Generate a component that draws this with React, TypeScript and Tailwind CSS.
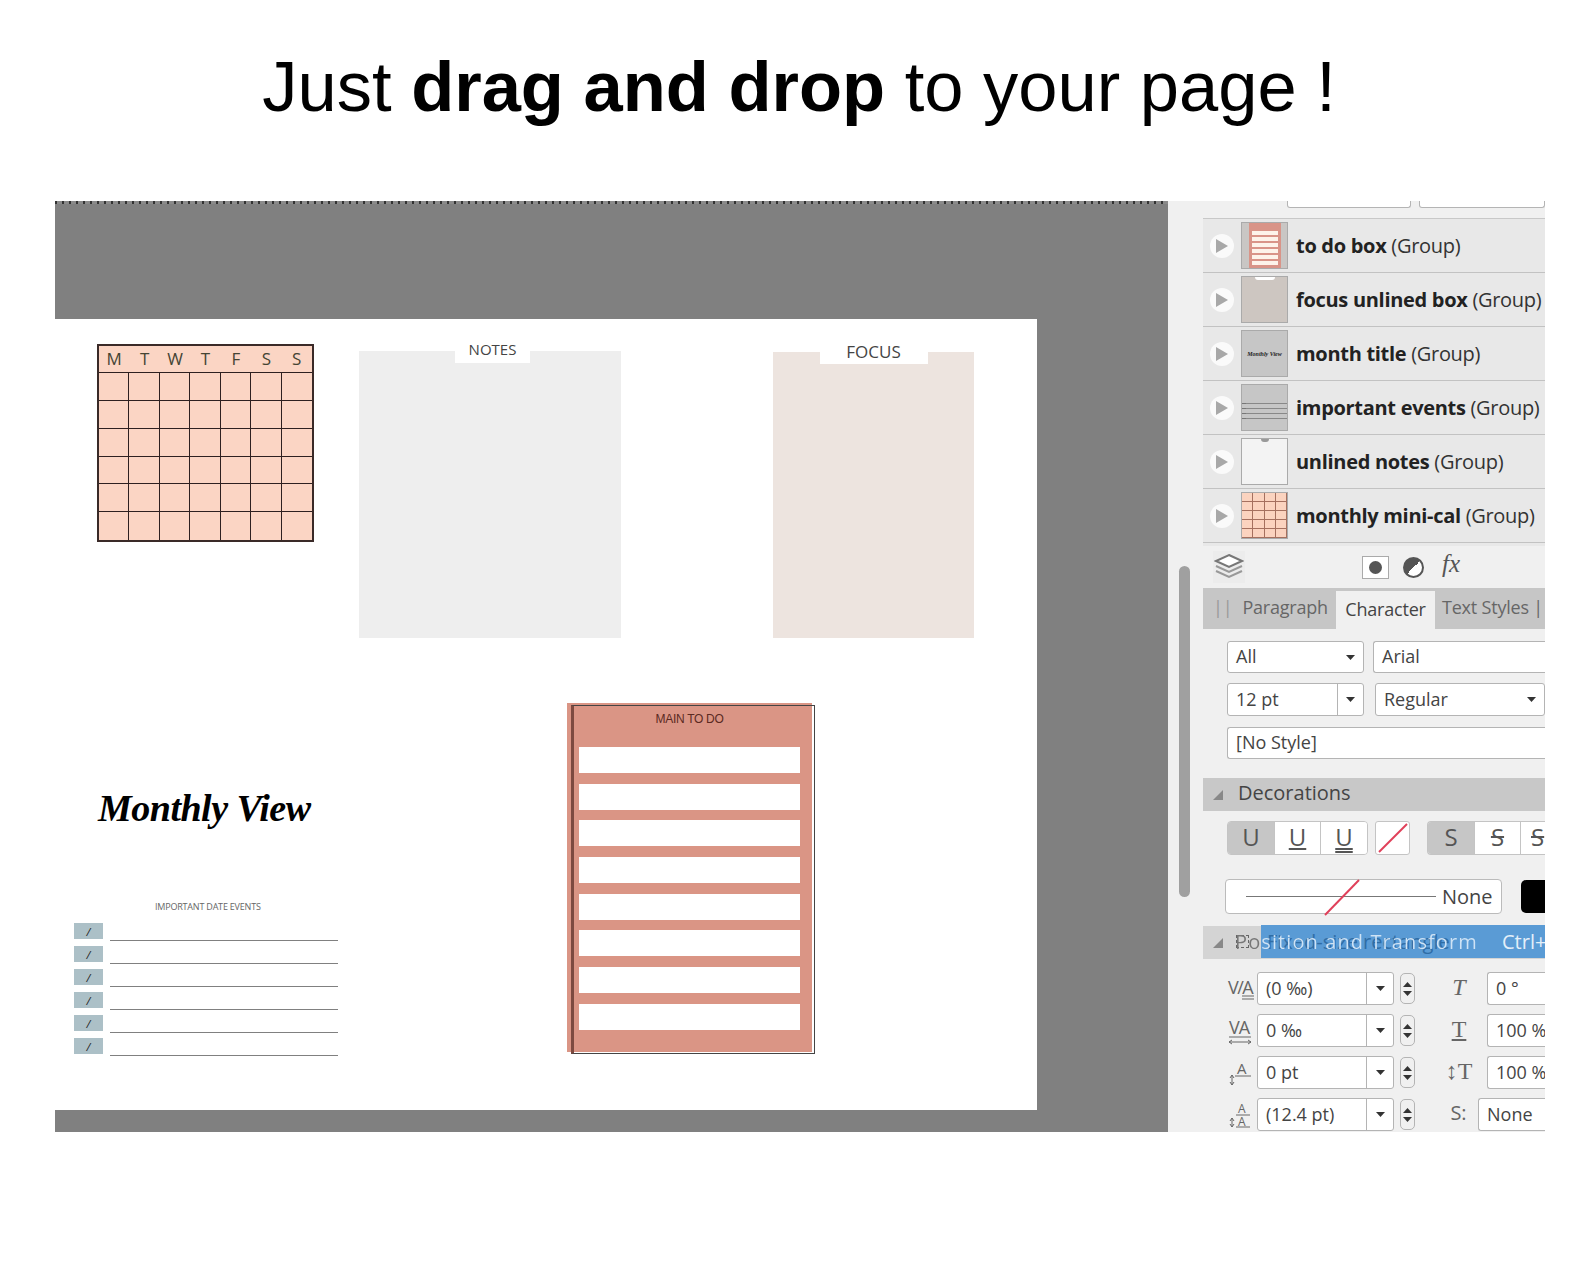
import React from 'react';

const ui = "font-['Open_Sans','Noto_Sans',sans-serif]";

const layers = [
  { name: 'to do box', thumb: 'todo' },
  { name: 'focus unlined box', thumb: 'focus' },
  { name: 'month title', thumb: 'title' },
  { name: 'important events', thumb: 'events' },
  { name: 'unlined notes', thumb: 'notes' },
  { name: 'monthly mini-cal', thumb: 'cal' },
];

const Caret = () => (
  <svg width="9" height="5" viewBox="0 0 9 5" className="shrink-0">
    <path d="M0 0h9L4.5 5z" fill="#333" />
  </svg>
);

const Thumb: React.FC<{ kind: string }> = ({ kind }) => {
  if (kind === 'todo') {
    return (
      <div className="w-[47px] h-[47px] bg-[#c9c6c4] border border-[#aaa] flex justify-center">
        <div className="w-[32px] h-full bg-[#d99488] flex flex-col gap-[2px] px-[3px] pt-[8px]">
          {[0, 1, 2, 3, 4, 5].map((i) => (
            <div key={i} className="h-[4px] bg-[#fdf3ea]" />
          ))}
        </div>
      </div>
    );
  }
  if (kind === 'focus') {
    return (
      <div className="w-[47px] h-[47px] bg-[#cdc6c1] border border-[#aaa] flex justify-center">
        <div className="w-[20px] h-[3px] bg-white rounded-b-full" />
      </div>
    );
  }
  if (kind === 'title') {
    return (
      <div className="w-[47px] h-[47px] bg-[#c6c6c6] border border-[#aaa] flex items-center justify-center overflow-hidden">
        <span className="text-[6px] leading-none font-bold italic text-[#222] whitespace-nowrap font-['Liberation_Serif',serif]">Monthly View</span>
      </div>
    );
  }
  if (kind === 'events') {
    return (
      <div className="w-[47px] h-[47px] bg-[#c6c6c6] border border-[#aaa] flex flex-col justify-center gap-[4px] pt-[6px]">
        {[0, 1, 2, 3].map((i) => (
          <div key={i} className="h-px bg-[#888] border-l-4 border-[#777]" />
        ))}
      </div>
    );
  }
  if (kind === 'notes') {
    return (
      <div className="w-[47px] h-[47px] bg-[#f3f3f3] border border-[#aaa] flex justify-center">
        <div className="w-[8px] h-[3px] bg-[#999] rounded-b-full" />
      </div>
    );
  }
  return (
    <div className="w-[47px] h-[47px] bg-[#fbd3bf] border border-[#aaa] grid grid-cols-4 grid-rows-5">
      {Array.from({ length: 20 }).map((_, i) => (
        <div key={i} className="border-r border-b border-[#a5705f]" />
      ))}
    </div>
  );
};

const LayerRow: React.FC<{ name: string; thumb: string }> = ({ name, thumb }) => (
  <div className="h-[54px] flex items-center border-b border-[#c2c2c2] bg-[#e8e8e8] shrink-0">
    <div className="w-[38px] flex justify-center shrink-0">
      <div className="w-[24px] h-[24px] rounded-full bg-[#fafafa] flex items-center justify-center">
        <svg width="14" height="16" viewBox="0 0 14 16">
          <path d="M1 1l12 7-12 7z" fill="#a8a8a8" />
        </svg>
      </div>
    </div>
    <Thumb kind={thumb} />
    <span className="ml-[8px] text-[20px] tracking-[-0.3px] text-[#333] whitespace-nowrap">
      <b className="font-bold text-[#222]">{name}</b> (Group)
    </span>
  </div>
);

const Select: React.FC<{ label: string; className: string; split?: boolean; caret?: boolean }> = ({
  label,
  className,
  split,
  caret = true,
}) => (
  <div className={`flex items-center bg-white border border-[#b4b4b4] rounded-[3px] pl-[8px] text-[18px] text-[#444] whitespace-nowrap ${className}`}>
    <span className="flex-1 pb-[1px]">{label}</span>
    {caret && (
      <span className={`h-full flex items-center justify-center w-[26px] shrink-0 ${split ? 'border-l border-[#b4b4b4]' : ''}`}>
        <Caret />
      </span>
    )}
  </div>
);

const Spinner = () => (
  <div className="w-[15px] h-[31px] border border-[#b4b4b4] rounded-[5px] flex flex-col items-center justify-center gap-[4px] ml-[6px] shrink-0">
    <svg width="9" height="5" viewBox="0 0 9 5"><path d="M4.5 0L9 5H0z" fill="#333" /></svg>
    <svg width="9" height="5" viewBox="0 0 9 5"><path d="M0 0h9L4.5 5z" fill="#333" /></svg>
  </div>
);

// character metric icons, built from real letters plus rules and arrows
const MetricIcon: React.FC<{ kind: number }> = ({ kind }) => (
  <svg width="28" height="32" viewBox="0 0 28 32" fontFamily="'Open Sans',sans-serif" fill="#666" stroke="none">
    {kind === 0 && (
      <>
        <text x="1" y="21" fontSize="18" letterSpacing="-1.5">V/A</text>
        <path d="M15 23h12M15 26h12" stroke="#666" fill="none" />
      </>
    )}
    {kind === 1 && (
      <>
        <text x="2" y="19" fontSize="18" letterSpacing="-1">VA</text>
        <path d="M2 22h22M2 27h22M2 27l3-2M2 27l3 2M24 27l-3-2M24 27l-3 2" stroke="#666" fill="none" />
      </>
    )}
    {kind === 2 && (
      <>
        <text x="10" y="17" fontSize="15">A</text>
        <path d="M8 19h16M5 18v10M5 18l-2 3M5 18l2 3M5 28l-2-3M5 28l2-3" stroke="#666" fill="none" />
      </>
    )}
    {kind === 3 && (
      <>
        <text x="11" y="14" fontSize="12">A</text>
        <text x="11" y="27" fontSize="12">A</text>
        <path d="M9 16h14M9 28h14M5 19v9M5 19l-2 3M5 19l2 3M5 28l-2-3M5 28l2-3" stroke="#666" fill="none" />
      </>
    )}
  </svg>
);

const metricRows = [
  { value: '(0 ‰)', side: 'T', sideValue: '0 °', sideClass: "w-[72px] pl-[16px] text-[24px] italic font-['Liberation_Serif']" },
  { value: '0 ‰', side: 'T', sideValue: '100 %', sideClass: "w-[72px] pl-[16px] text-[24px] underline font-['Liberation_Serif']" },
  { value: '0 pt', side: '↕T', sideValue: '100 %', sideClass: "w-[72px] pl-[16px] text-[24px] font-['Liberation_Serif']" },
  { value: '(12.4 pt)', side: 'S:', sideValue: 'None', sideClass: 'w-[63px] pl-[24px] text-[20px]' },
];

const DecoButton: React.FC<{ label: string; className: string; on?: boolean }> = ({ label, className, on }) => (
  <div className={`h-full shrink-0 flex items-center justify-center text-[24px] pb-[3px] text-[#555] border-r border-[#c4c4c4] ${on ? 'bg-[#c6c6c6]' : 'bg-white'} ${className}`}>
    {label}
  </div>
);

const Panel = () => (
  <div className={`w-[377px] bg-[#f0f0f0] flex overflow-hidden ${ui}`}>
    {/* scrollbar */}
    <div className="w-[35px] shrink-0 pt-[365px] pl-[11px]">
      <div className="w-[11px] h-[331px] bg-[#a0a0a0] rounded-full" />
    </div>

    <div className="flex-1 min-w-0 flex flex-col">
      {/* clipped fields from the panel above */}
      <div className="h-[18px] flex gap-[8px] pl-[84px] shrink-0 border-b border-[#c8c8c8]">
        <div className="w-[128px] h-[7px] bg-white border-x border-b border-[#b4b4b4] rounded-b-[3px]" />
        <div className="w-[130px] h-[7px] bg-white border-x border-b border-[#b4b4b4] rounded-b-[3px]" />
      </div>

      {layers.map((l) => (
        <LayerRow key={l.name} name={l.name} thumb={l.thumb} />
      ))}
      <div className="h-[3px] shrink-0 bg-[#e8e8e8]" />

      {/* layer tools */}
      <div className="h-[42px] flex items-center shrink-0">
        <div className="ml-[10px] w-[32px] h-[32px] flex items-center justify-center bg-[#ececec]">
          <svg width="30" height="28" viewBox="0 0 30 28" fill="none" stroke="#999" strokeWidth="2">
            <path d="M15 2l13 6-13 6-13-6z" fill="#fff" stroke="#777" />
            <path d="M2 13l13 6 13-6M2 18l13 6 13-6" />
          </svg>
        </div>
        <div className="ml-[117px] w-[27px] h-[23px] bg-white border border-[#aaa] flex items-center justify-center">
          <div className="w-[13px] h-[13px] rounded-full bg-[#555]" />
        </div>
        <div className="ml-[14px] w-[21px] h-[21px] rounded-full border-2 border-[#555] bg-[linear-gradient(135deg,#555_50%,#fff_50%)]" />
        <span className="ml-[18px] font-['Liberation_Serif'] italic text-[25px] text-[#555] pb-[6px]">fx</span>
      </div>

      {/* tabs */}
      <div className="h-[41px] bg-[#c6c6c6] flex items-end shrink-0 text-[18px] text-[#666] tracking-[-0.2px]">
        <div className="h-full flex items-center w-[133px] pl-[10px] pb-[2px]">
          <span className="text-[#999] mr-[10px]">||</span>Paragraph
        </div>
        <div className="h-[38px] w-[99px] bg-[#f0f0f0] flex items-center justify-center text-[#444] pb-[2px]">Character</div>
        <div className="h-full flex items-center pl-[7px] pb-[2px] whitespace-nowrap">Text Styles |</div>
      </div>

      {/* character fields */}
      <div className="flex flex-col pl-[24px] pt-[12px] shrink-0">
        <div className="flex h-[32px] gap-[9px]">
          <Select label="All" className="w-[137px]" />
          <Select label="Arial" className="flex-1 rounded-r-none border-r-0" caret={false} />
        </div>
        <div className="flex h-[33px] gap-[11px] mt-[10px]">
          <Select label="12 pt" className="w-[137px]" split />
          <Select label="Regular" className="flex-1" />
        </div>
        <div className="flex h-[32px] mt-[11px]">
          <Select label="[No Style]" className="flex-1 rounded-r-none border-r-0" caret={false} />
        </div>
      </div>

      {/* decorations */}
      <div className="h-[33px] mt-[19px] bg-[#c8c8c8] flex items-center shrink-0 text-[20px] text-[#444]">
        <svg width="12" height="12" viewBox="0 0 12 12" className="ml-[9px]"><path d="M11 1v10H1z" fill="#888" /></svg>
        <span className="ml-[14px] pb-[4px]">Decorations</span>
      </div>

      <div className="h-[34px] mt-[10px] pl-[24px] flex shrink-0">
        <div className="flex h-full border border-[#c4c4c4] rounded-[4px] overflow-hidden">
          <DecoButton label="U" className="w-[47px]" on />
          <DecoButton label="U" className="w-[46px] underline" />
          <DecoButton label="U" className="w-[46px] underline decoration-double border-r-0" />
        </div>
        <div className="ml-[7px] w-[35px] h-full bg-white border border-[#c4c4c4] rounded-[3px]">
          <svg width="33" height="32" viewBox="0 0 33 32">
            <path d="M3 30L31 2" stroke="#e0405a" strokeWidth="2" />
          </svg>
        </div>
        <div className="ml-[17px] flex-1 flex h-full border border-[#c4c4c4] border-r-0 rounded-l-[4px] overflow-hidden">
          <DecoButton label="S" className="w-[47px]" on />
          <DecoButton label="S" className="w-[46px] line-through" />
          <DecoButton label="S" className="w-[30px] line-through border-r-0 justify-start pl-[10px]" />
        </div>
      </div>

      {/* line style */}
      <div className="h-[35px] mt-[24px] pl-[22px] flex items-center shrink-0">
        <div className="w-[277px] h-full bg-white border border-[#bbb] rounded-[4px] flex items-center pl-[20px] relative text-[20px] text-[#444]">
          <div className="w-[190px] h-px bg-[#777]" />
          <span className="ml-[6px]">None</span>
          <svg width="36" height="37" viewBox="0 0 36 37" className="absolute left-[98px] top-[-1px]">
            <path d="M1 36L35 1" stroke="#e0405a" strokeWidth="2" />
          </svg>
        </div>
        <div className="ml-[19px] flex-1 h-[33px] bg-black rounded-l-[5px]" />
      </div>

      {/* transform header, the drag ghost lies across it */}
      <div className="h-[33px] mt-[12px] bg-[#d4d4d4] flex items-center shrink-0 relative text-[20px] whitespace-nowrap">
        <div className="absolute left-[58px] right-0 top-[-1px] h-[33px] bg-[#5a9bd5]" />
        <span className="absolute left-[64px] top-0 h-[31px] flex items-center text-[#2f6da6]">Fixed-size rectangle</span>
        <svg width="12" height="12" viewBox="0 0 12 12" className="relative ml-[9px]"><path d="M11 1v10H1z" fill="#888" /></svg>
        <div className="absolute left-[33px] top-[9px] w-[13px] h-[13px] border border-dashed border-[#666]" />
        <span className="relative ml-[11px] pb-[2px] tracking-[1.1px] bg-clip-text text-transparent bg-[linear-gradient(90deg,#777_27px,#cfe3f5_27px)]">Position and Transform</span>
        <span className="absolute left-[299px] top-0 h-[31px] flex items-center text-[#e4eff9]">Ctrl+</span>
      </div>

      {/* metrics */}
      <div className="flex flex-col gap-[9px] pt-[13px] shrink-0">
        {metricRows.map((r, i) => (
          <div key={i} className="h-[33px] flex items-center">
            <div className="w-[54px] pl-[24px] shrink-0 flex items-center"><MetricIcon kind={i} /></div>
            <div className="w-[137px] h-full bg-white border border-[#b4b4b4] rounded-[3px] flex items-center pl-[8px] text-[18px] text-[#444] shrink-0">
              <span className="flex-1 pb-[1px]">{r.value}</span>
              <span className="h-full w-[27px] border-l border-[#b4b4b4] flex items-center justify-center"><Caret /></span>
            </div>
            <Spinner />
            <span className={`text-center text-[#666] shrink-0 pb-[3px] ${r.sideClass}`}>{r.side}</span>
            <div className="flex-1 h-full bg-white border border-[#b4b4b4] border-r-0 rounded-l-[3px] flex items-center pl-[8px] pb-[1px] text-[18px] text-[#444] whitespace-nowrap overflow-hidden">
              {r.sideValue}
            </div>
          </div>
        ))}
      </div>
    </div>
  </div>
);

const Calendar = () => (
  <div className="absolute left-[42px] top-[25px] w-[217px] h-[198px] bg-[#fbd5c4] border-2 border-[#3a2a28] flex flex-col font-['Open_Sans',sans-serif]">
    <div className="h-[27px] pb-[2px] grid grid-cols-7 border-b border-[#2e2020] text-[17px] text-[#443] text-center items-center leading-none">
      {['M', 'T', 'W', 'T', 'F', 'S', 'S'].map((d, i) => (
        <span key={i}>{d}</span>
      ))}
    </div>
    <div className="flex-1 grid grid-cols-7 grid-rows-6">
      {Array.from({ length: 42 }).map((_, i) => (
        <div key={i} className={`border-[#2e2020] ${i % 7 !== 6 ? 'border-r' : ''} ${i < 35 ? 'border-b' : ''}`} />
      ))}
    </div>
  </div>
);

const Note: React.FC<{ title: string; className: string; tab: string }> = ({ title, className, tab }) => (
  <div className={`absolute flex justify-center font-['Open_Sans',sans-serif] ${className}`}>
    <div className={`h-[13px] bg-white leading-none text-[#444] flex justify-center -mt-[1px] overflow-visible ${tab}`}>
      <span className="-mt-[8px] h-[20px] px-2 bg-white whitespace-nowrap">{title}</span>
    </div>
  </div>
);

const Page = () => (
  <div className="relative w-[982px] h-[791px] bg-white">
    <Calendar />
    <Note title="NOTES" className="left-[304px] top-[32px] w-[262px] h-[287px] bg-[#eeeeee]" tab="w-[75px] ml-[5px] text-[15px]" />
    <Note title="FOCUS" className="left-[718px] top-[33px] w-[201px] h-[286px] bg-[#ede4df]" tab="w-[108px] text-[17px]" />

    <div className="absolute left-[43px] top-[470px] text-[38px] leading-none font-bold italic text-black whitespace-nowrap font-['Liberation_Serif',serif] tracking-[-0.5px]">
      Monthly View
    </div>

    {/* important dates block */}
    <div className="absolute left-[19px] top-[581px] w-[264px] flex flex-col font-['Open_Sans',sans-serif]">
      <div className="h-[23px] pl-[81px] text-[9px] tracking-[-0.2px] text-[#666] whitespace-nowrap leading-[14px]">IMPORTANT DATE EVENTS</div>
      <div className="flex flex-col gap-[7px]">
        {[0, 1, 2, 3, 4, 5].map((i) => (
          <div key={i} className="flex h-[16px]">
            <div className="w-[29px] bg-[#acc0c7] flex items-center justify-center text-[11px] italic leading-none text-[#222]">/</div>
            <div className="ml-[7px] flex-1 h-[18px] border-b border-[#808080]" />
          </div>
        ))}
      </div>
    </div>

    {/* to do box, the outline sits slightly off the fill */}
    <div className="absolute left-[512px] top-[384px] w-[248px] h-[351px]">
      <div className="absolute left-0 top-0 w-[245px] h-[349px] bg-[#da9585] flex flex-col items-center font-['Liberation_Sans',sans-serif]">
        <div className="h-[44px] pt-[10px] text-[12px] tracking-[-0.3px] text-[#5b2a22] leading-none shrink-0">MAIN TO DO</div>
        <div className="w-[221px] flex flex-col gap-[10.7px]">
          {[0, 1, 2, 3, 4, 5, 6, 7].map((i) => (
            <div key={i} className="h-[26px] bg-white" />
          ))}
        </div>
      </div>
      <div className="absolute left-[4px] top-[2px] right-0 bottom-0 border border-[#444] border-l-[3px] border-l-[#7d4a40]" />
    </div>
  </div>
);

export default function App() {
  return (
    <div className="w-[1588px] h-[1270px] bg-white">
      <h1 className="h-[201px] flex justify-center pt-[44px] pl-[10px] text-[70.5px] leading-[86px] font-normal text-black font-['Liberation_Sans',sans-serif] whitespace-pre">
        <span>Just <b className="font-bold">drag and drop</b> to your page !</span>
      </h1>
      <div className="ml-[55px] w-[1490px] h-[931px] flex">
        <div className="w-[1113px] bg-[#808080] flex flex-col overflow-hidden">
          <div className="h-[3px] shrink-0 bg-[repeating-linear-gradient(90deg,#333_0_2px,#8a8a8a_2px_7px)]" />
          <div className="pt-[115px]">
            <Page />
          </div>
        </div>
        <Panel />
      </div>
    </div>
  );
}
